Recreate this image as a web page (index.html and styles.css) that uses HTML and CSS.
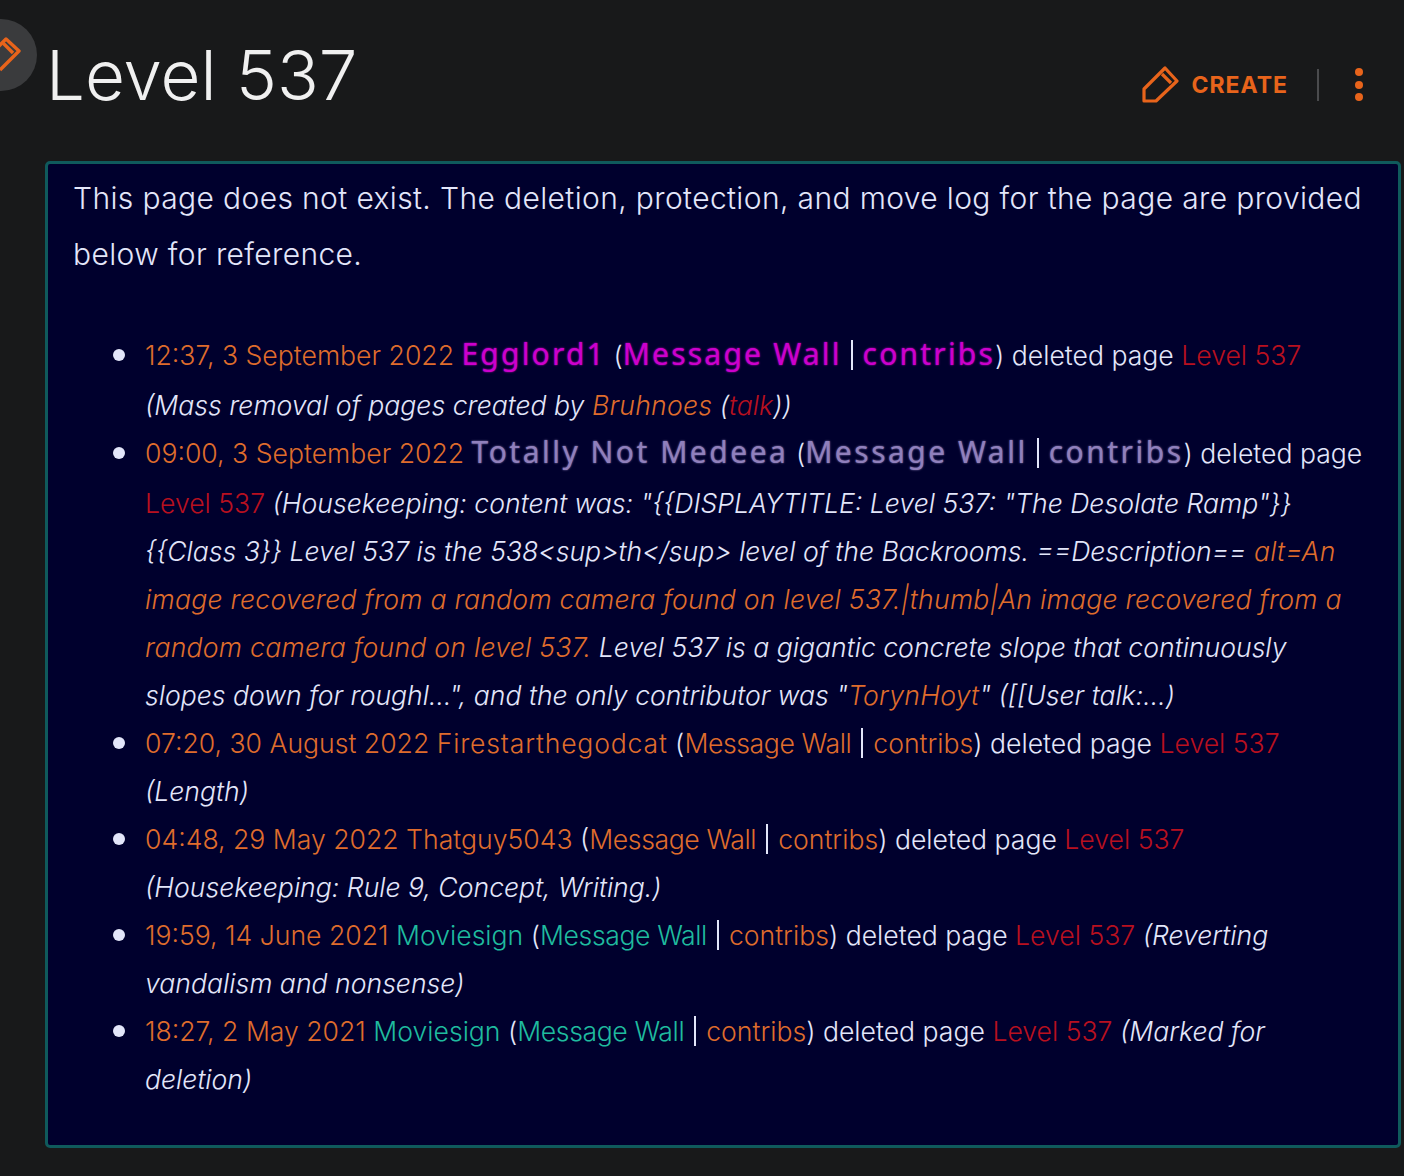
FILE: index.html
```html
<!DOCTYPE html>
<html>
<head>
  <title>Level 537</title>
  <link rel="stylesheet" href="styles.css">
</head>
<body>

  <div class="side-button">
    <svg width="30" height="44" viewBox="0 0 30 44" fill="none" stroke="#e8641b" stroke-width="3.4" stroke-linejoin="round">
      <path d="M-6 17 L6 5 L19 17 L0 36"/>
      <path d="M3 9 L13 19"/>
    </svg>
  </div>

  <header>
    <h1>Level 537</h1>
    <div class="actions">
      <a class="create-button">
        <svg width="37" height="37" viewBox="0 0 37 37" fill="none" stroke="#e8641b" stroke-width="3.2" stroke-linejoin="round">
          <path d="M2 23 L23 2 L35 15 L14 35 L2 35 Z"/>
          <path d="M20 8 L29 17"/>
        </svg>
        CREATE
      </a>
      <span class="divider"></span>
      <div class="more-button"><i></i><i></i><i></i></div>
    </div>
  </header>

  <div class="content-box">
    <p class="notice">This page does not exist. The deletion, protection, and move log for the page are provided<br>below for reference.</p>

    <ul class="log">
      <li>
        <a class="date">12:37, 3 September 2022</a> <a class="name staff">Egglord1</a> (<a class="name staff">Message Wall</a><span class="sep"></span><a class="name staff">contribs</a>) deleted page <a class="red">Level 537</a><br>
        <em>(Mass removal of pages created by <a class="date">Bruhnoes</a> (<a class="red">talk</a>))</em>
      </li>
      <li>
        <a class="date">09:00, 3 September 2022</a> <a class="name mod">Totally Not Medeea</a> (<a class="name mod">Message Wall</a><span class="sep"></span><a class="name mod">contribs</a>) deleted page<br>
        <a class="red">Level 537</a>
        <em>(Housekeeping: content was: "{{DISPLAYTITLE: Level 537: "The Desolate Ramp"}}<br>
        {{Class 3}} Level 537 is the 538&lt;sup&gt;th&lt;/sup&gt; level of the Backrooms. ==Description== <a class="date">alt=An<br>
        image recovered from a random camera found on level 537.|thumb|An image recovered from a<br>
        random camera found on level 537.</a> Level 537 is a gigantic concrete slope that continuously<br>
        slopes down for roughl...", and the only contributor was "<a class="date">TorynHoyt</a>" ([[User talk:...)</em>
      </li>
      <li>
        <a class="date">07:20, 30 August 2022 <span class="wide">Firestarthegodcat</span></a> (<a class="date wall">Message Wall</a><span class="sep"></span><a class="date">contribs</a>) deleted page <a class="red">Level 537</a><br>
        <em>(Length)</em>
      </li>
      <li>
        <a class="date">04:48, 29 May 2022 Thatguy5043</a> (<a class="date wall">Message Wall</a><span class="sep"></span><a class="date">contribs</a>) deleted page <a class="red">Level 537</a><br>
        <em>(Housekeeping: Rule 9, Concept, Writing.)</em>
      </li>
      <li>
        <a class="date">19:59, 14 June 2021</a> <a class="green">Moviesign</a> (<a class="green wall">Message Wall</a><span class="sep"></span><a class="date">contribs</a>) deleted page <a class="red">Level 537</a>
        <em>(Reverting<br>
        vandalism and nonsense)</em>
      </li>
      <li>
        <a class="date">18:27, 2 May 2021</a> <a class="green">Moviesign</a> (<a class="green wall">Message Wall</a><span class="sep"></span><a class="date">contribs</a>) deleted page <a class="red">Level 537</a>
        <em>(Marked for<br>
        deletion)</em>
      </li>
    </ul>
  </div>

</body>
</html>
```

FILE: styles.css
```css
html, body {
  height: 1176px;
  overflow: hidden;
}

body {
  font-family: "Inter", "Liberation Sans", sans-serif;
  font-weight: 300;
  margin: 0;
  padding: 0;
  background-color: #18191a;
  color: #e3e6fa;
  position: relative;
}

.side-button {
  position: absolute;
  top: 19px;
  left: -35px;
  width: 72px;
  height: 72px;
  border-radius: 50%;
  background-color: #3a3b3d;
}

.side-button svg {
  position: absolute;
  top: 15px;
  left: 35px;
  overflow: visible;
}

header {
  display: flex;
  align-items: flex-start;
  justify-content: space-between;
  height: 161px;
  box-sizing: border-box;
  padding: 32px 41px 0 46px;
}

header h1 {
  margin: 0;
  font-size: 69px;
  line-height: 86px;
  font-weight: 300;
  color: #f0f0f0;
}

.actions {
  display: flex;
  align-items: center;
  margin-top: 34px;
}

.create-button {
  display: flex;
  align-items: center;
  gap: 12px;
  color: #e8641b;
  font-weight: 700;
  font-size: 23px;
  letter-spacing: 1px;
}

.divider {
  width: 2px;
  height: 32px;
  background-color: #4a4b4d;
  margin: 0 36px 0 29px;
}

.more-button {
  display: flex;
  flex-direction: column;
  gap: 4.5px;
}

.more-button i {
  display: block;
  width: 8px;
  height: 8px;
  border-radius: 50%;
  background-color: #e8641b;
}

.content-box {
  width: 1356px;
  height: 987px;
  margin-left: 45px;
  box-sizing: border-box;
  border: 3px solid #0f5a5c;
  border-radius: 5px;
  background-color: #00002d;
  padding: 6px 25px 0 25px;
}

.notice {
  margin: 0 0 49px 0;
  font-size: 30px;
  line-height: 56px;
  letter-spacing: 0.37px;
}

.log {
  margin: 0;
  padding: 0 0 0 72px;
  font-size: 26.6px;
  line-height: 48px;
  list-style: none;
}

.log li {
  position: relative;
  white-space: nowrap;
}

.log li::before {
  content: "";
  position: absolute;
  top: 18px;
  left: -32px;
  width: 12px;
  height: 12px;
  border-radius: 50%;
  background-color: #e3e6fa;
}

.sep {
  display: inline-block;
  width: 2px;
  height: 30px;
  margin: 0 10px;
  vertical-align: -5px;
  background-color: #e3e6fa;
}

.staff + .sep,
.mod + .sep {
  margin-left: 9px;
  margin-bottom: 11px;
  vertical-align: -16px;
}

.date {
  color: #df6c2c;
}

em .date {
  letter-spacing: 0.25px;
}

.wall {
  letter-spacing: -0.4px;
}

.wide {
  letter-spacing: 0.8px;
}

.red {
  color: #b8101f;
}

.green {
  color: #1fbb9f;
}

.name {
  font-family: "Noto Sans", sans-serif;
  font-weight: 400;
  font-size: 30px;
  line-height: 44px;
  letter-spacing: 2.2px;
}

.staff {
  color: #cc00cc;
  text-shadow: 0 0 2px #cc00cc;
}

.mod {
  color: #9080bc;
  text-shadow: 0 0 2px #9080bc;
  letter-spacing: 2.5px;
}
```
